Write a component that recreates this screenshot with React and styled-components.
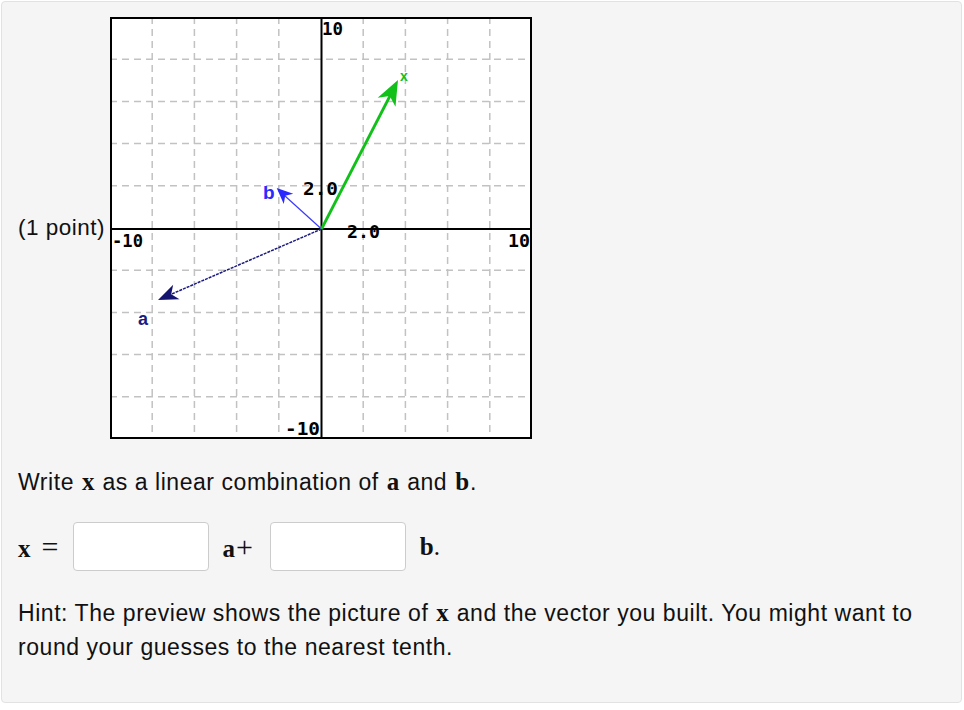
import React from "react";
import styled, { createGlobalStyle } from "styled-components";

const Global = createGlobalStyle`
  html, body { margin: 0; padding: 0; background: #ffffff; }
  body { font-family: "Liberation Sans", Arial, sans-serif; color: #111; }
`;

const Panel = styled.div`
  margin: 1px 2px 0 1px;
  min-height: 702px;
  box-sizing: border-box;
  background: #f5f5f5;
  border: 1px solid #e2e2e2;
  border-radius: 4px;
  padding: 15px 16px 0 16px;
  display: flex;
  flex-direction: column;
`;

const GraphRow = styled.div`
  display: flex;
  align-items: center;
  gap: 5px;
`;

const Text = styled.span`
  font-size: 22.5px;
  letter-spacing: 0.5px;
  line-height: 34px;
`;

const Para = styled.p`
  margin: ${(p) => p.$top}px 0 0 0;
  font-size: 23px;
  letter-spacing: 0.55px;
  line-height: 34px;
`;

const Bold = styled.span`
  font-family: "Liberation Serif", "Times New Roman", serif;
  font-weight: bold;
  font-size: 25px;
  line-height: 1;
  letter-spacing: 0;
  margin: 0 1px;
`;

const AnswerRow = styled.div`
  margin-top: 23px;
  display: flex;
  align-items: center;
  height: 49px;
`;

const MathText = styled.span`
  display: flex;
  align-items: baseline;
  font-family: "Liberation Serif", "Times New Roman", serif;
  font-size: 25px;
  margin: 0 ${(p) => p.$right}px 0 ${(p) => p.$left}px;
  b { font-weight: bold; }
`;

const Op = styled.span`
  margin-left: ${(p) => p.$gap}px;
  font-size: ${(p) => p.$size}px;
`;

const Input = styled.input`
  width: 136px;
  height: 49px;
  box-sizing: border-box;
  border: 1px solid #cccccc;
  border-radius: 4px;
  background: #ffffff;
  outline: none;
`;

const S = 422;
const O = { x: 211.5, y: 212 };
const step = 42.2;

function arrowHead(from, to, L, W) {
  const dx = to.x - from.x;
  const dy = to.y - from.y;
  const len = Math.hypot(dx, dy);
  const ux = dx / len;
  const uy = dy / len;
  const nx = -uy;
  const ny = ux;
  const bx = to.x - L * ux;
  const by = to.y - L * uy;
  const ix = to.x - L * 0.72 * ux;
  const iy = to.y - L * 0.72 * uy;
  return `${to.x},${to.y} ${bx + W * nx},${by + W * ny} ${ix},${iy} ${bx - W * nx},${by - W * ny}`;
}

function Graph() {
  const grid = [];
  for (let k = 1; k < 10; k++) {
    if (k === 5) continue;
    const p = k * step;
    grid.push(<line key={"v" + k} x1={p} y1={0} x2={p} y2={S} />);
    grid.push(<line key={"h" + k} x1={0} y1={p} x2={S} y2={p} />);
  }
  const a = { x: 48, y: 283 };
  const b = { x: 166.7, y: 171 };
  const xv = { x: 288, y: 63 };
  const lab = {
    fontFamily: '"DejaVu Sans Mono", "Liberation Mono", monospace',
    fontWeight: "bold",
    fontSize: 17,
    fill: "#000",
    lengthAdjust: "spacingAndGlyphs",
  };
  return (
    <svg width={S} height={S} viewBox={`0 0 ${S} ${S}`} style={{ display: "block" }}>
      <rect x="0" y="0" width={S} height={S} fill="#ffffff" />
      <g stroke="#c2c2c2" strokeWidth="1.5" strokeDasharray="7 5">
        {grid}
      </g>
      <line x1={O.x} y1={0} x2={O.x} y2={S} stroke="#000" strokeWidth="2" />
      <line x1={0} y1={O.y} x2={S} y2={O.y} stroke="#000" strokeWidth="2" />
      <rect x="1" y="1" width={S - 2} height={S - 2} fill="none" stroke="#000" strokeWidth="2" />

      <text {...lab} x="212" y="18" textLength="21">10</text>
      <text {...lab} x="2" y="230" textLength="31">-10</text>
      <text {...lab} x="398" y="230" textLength="22">10</text>
      <text {...lab} x="175" y="418" textLength="35">-10</text>
      <text {...lab} x="193" y="178" textLength="35">2.0</text>
      <text {...lab} x="237" y="221" textLength="33">2.0</text>

      <line x1={O.x} y1={O.y} x2={a.x + 8} y2={a.y - 3.5} stroke="#1c1c80" strokeWidth="1.5" strokeDasharray="3 1" />
      <polygon points={arrowHead(O, a, 20, 8)} fill="#14146e" />
      <text x="28" y="308" fill="#1c1c80" fontFamily='"Liberation Sans", Arial, sans-serif' fontWeight="bold" fontSize="18">a</text>

      <line x1={O.x} y1={O.y} x2={b.x + 5} y2={b.y + 5} stroke="#3a3aff" strokeWidth="1.2" />
      <polygon points={arrowHead(O, b, 16, 7)} fill="#2a2aff" />
      <text x="153" y="182" fill="#2a2aff" fontFamily='"Liberation Sans", Arial, sans-serif' fontWeight="bold" fontSize="19">b</text>

      <line x1={O.x} y1={O.y} x2={xv.x - 6} y2={xv.y + 12} stroke="#11c11a" strokeWidth="2.8" />
      <polygon points={arrowHead(O, xv, 25, 10)} fill="#11c11a" />
      <text x="290" y="64" fill="#11c11a" fontFamily='"Liberation Sans", Arial, sans-serif' fontWeight="bold" fontSize="14">x</text>
    </svg>
  );
}

export default function App() {
  return (
    <>
      <Global />
      <Panel>
        <GraphRow>
          <Text>(1 point)</Text>
          <Graph />
        </GraphRow>
        <Para $top={26}>
          Write <Bold>x</Bold> as a linear combination of <Bold>a</Bold> and <Bold>b</Bold>.
        </Para>
        <AnswerRow>
          <MathText $left={0} $right={15}>
            <b>x</b>
            <Op $gap={11} $size={30}>=</Op>
          </MathText>
          <Input type="text" aria-label="coefficient of a" />
          <MathText $left={13} $right={17}>
            <b>a</b>
            <Op $gap={1} $size={30}>+</Op>
          </MathText>
          <Input type="text" aria-label="coefficient of b" />
          <MathText $left={14} $right={0}>
            <b>b</b>.
          </MathText>
        </AnswerRow>
        <Para $top={25}>
          Hint: The preview shows the picture of <Bold>x</Bold> and the vector you built. You might want to round your guesses to the nearest tenth.
        </Para>
      </Panel>
    </>
  );
}
